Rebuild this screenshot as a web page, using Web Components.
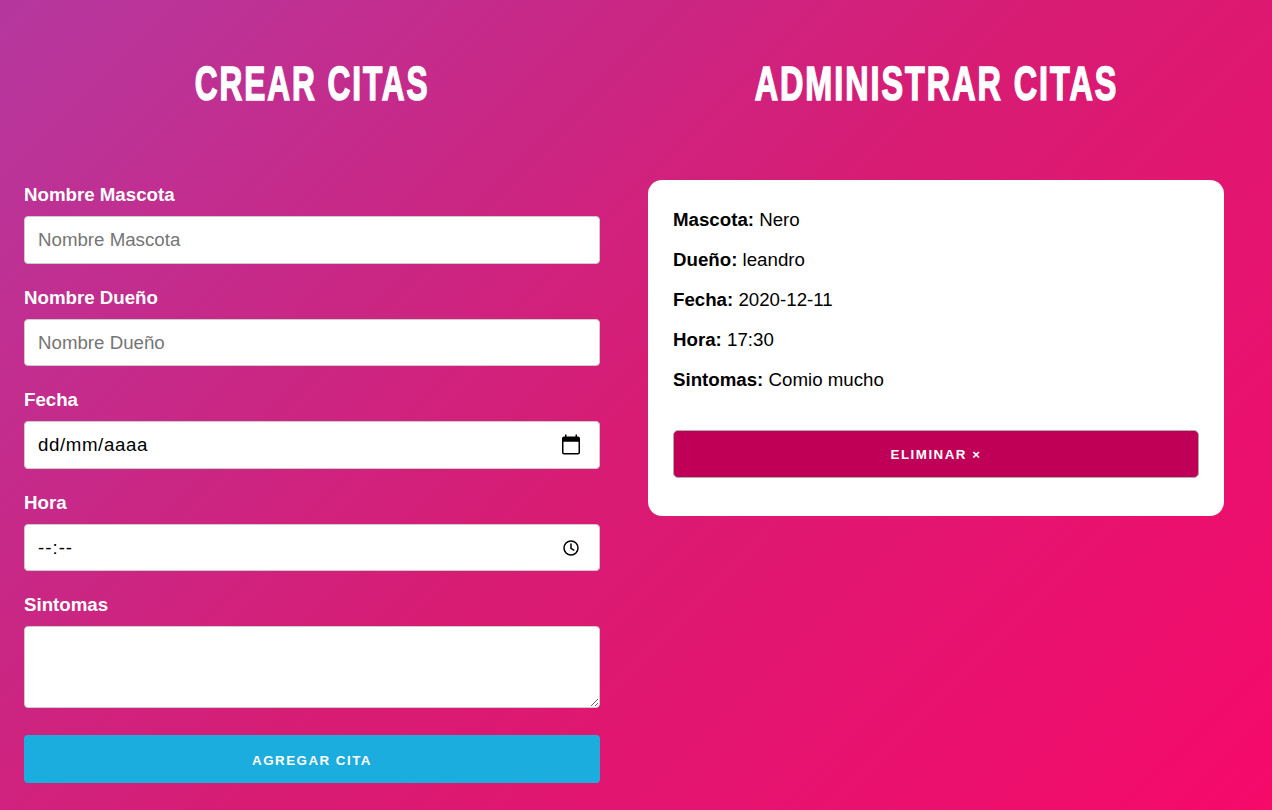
<!doctype html>
<html lang="es">
<head>
<meta charset="utf-8">
<title>Administrador de citas</title>
<style>
html { height: 100%; }
body {
  margin: 0;
  min-height: 100vh;
  background: linear-gradient(135deg, #b5389f 0%, #d71c74 50%, #f60a6a 100%);
  font-family: "Liberation Sans", Arial, sans-serif;
  font-size: 18.7px;
  overflow: hidden;
}
</style>
</head>
<body>
<citas-app>
  <citas-column titulo="Crear citas" escala="0.645">
    <cita-form></cita-form>
  </citas-column>
  <citas-column titulo="Administrar citas" escala="0.66">
    <cita-card mascota="Nero" dueno="leandro" fecha="2020-12-11" hora="17:30" sintomas="Comio mucho"></cita-card>
  </citas-column>
</citas-app>

<script>
const appTemplate = document.createElement('template')
appTemplate.innerHTML = `
  <style>
    :host {
      display: grid;
      grid-template-columns: 576px 576px;
      column-gap: 48px;
      padding: 0 24px;
    }
  </style>
  <slot></slot>
`

customElements.define('citas-app',
  class extends HTMLElement {
    constructor () {
      super()
      this.attachShadow({ mode: 'open' })
      this.shadowRoot.appendChild(appTemplate.content.cloneNode(true))
    }
  })

const columnTemplate = document.createElement('template')
columnTemplate.innerHTML = `
  <style>
    :host {
      display: block;
    }
    h2 {
      margin: 0;
      padding: 54px 0 0;
      height: 126px;
      box-sizing: border-box;
      color: white;
      text-align: center;
      text-transform: uppercase;
      font-family: "Liberation Sans", Arial, sans-serif;
      font-weight: 700;
      font-size: 49px;
      line-height: 58px;
      letter-spacing: 3px;
      white-space: nowrap;
    }
    /* no hay fuente condensada instalada: se estrecha y engorda la Liberation */
    span {
      display: inline-block;
      -webkit-text-stroke: 1.6px white;
    }
  </style>
  <h2><span></span></h2>
  <slot></slot>
`

customElements.define('citas-column',
  class extends HTMLElement {
    constructor () {
      super()
      this.attachShadow({ mode: 'open' })
      this.shadowRoot.appendChild(columnTemplate.content.cloneNode(true))
    }

    connectedCallback () {
      const title = this.shadowRoot.querySelector('span')
      title.textContent = this.getAttribute('titulo')
      title.style.transform = `scaleX(${this.getAttribute('escala')})`
    }
  })

const fieldTemplate = document.createElement('template')
fieldTemplate.innerHTML = `
  <style>
    :host {
      display: block;
      margin-bottom: 22px;
    }
    label {
      display: block;
      height: 21px;
      margin-bottom: 12px;
      color: white;
      font-weight: 700;
      font-size: 18.7px;
      line-height: 23px;
    }
  </style>
  <label></label>
  <slot></slot>
`

customElements.define('form-field',
  class extends HTMLElement {
    constructor () {
      super()
      this.attachShadow({ mode: 'open' })
      this.shadowRoot.appendChild(fieldTemplate.content.cloneNode(true))
    }

    connectedCallback () {
      this.shadowRoot.querySelector('label').textContent = this.getAttribute('label')
    }
  })

const formTemplate = document.createElement('template')
formTemplate.innerHTML = `
  <style>
    :host {
      display: block;
      padding-top: 57.4px;
    }
    .control {
      display: flex;
      align-items: center;
      justify-content: space-between;
      width: 100%;
      height: 47.5px;
      box-sizing: border-box;
      padding: 0 13px;
      border: 1px solid #ccc;
      border-radius: 4px;
      background: white;
      color: black;
      font: 18.7px "Liberation Sans", Arial, sans-serif;
    }
    input.control::placeholder {
      color: #757575;
    }
    textarea.control {
      display: block;
      height: 82px;
      resize: vertical;
    }
    .date span {
      letter-spacing: 0.6px;
    }
    .time span {
      letter-spacing: 1px;
    }
    .control svg {
      display: block;
      flex: none;
    }
    .date svg { margin-right: 3px; }
    .time svg { margin-right: 6px; }
    button {
      display: block;
      width: 100%;
      height: 48px;
      margin-top: 26.6px;
      padding: 3px 0 0;
      border: none;
      border-radius: 4px;
      background: #1caddf;
      color: white;
      font: 700 13.33px "Liberation Sans", Arial, sans-serif;
      letter-spacing: 1.5px;
      text-transform: uppercase;
    }
  </style>
  <form-field label="Nombre Mascota">
    <input class="control" type="text" placeholder="Nombre Mascota">
  </form-field>
  <form-field label="Nombre Dueño">
    <input class="control" type="text" placeholder="Nombre Dueño">
  </form-field>
  <form-field label="Fecha">
    <div class="control date">
      <span>dd/mm/aaaa</span>
      <svg width="24" height="24" viewBox="0 0 24 24"><path d="M19 3.500h-1V1.500h-1.500v2h-9v-2H6v2H5c-1.100 0-2 .9-2 2v14c0 1.100.9 2 2 2h14c1.100 0 2-.9 2-2v-14c0-1.100-.9-2-2-2zm.5 16c0 .3-.2.500-.5.500H5c-.3 0-.5-.2-.5-.5V8.800h15v10.700z"/></svg>
    </div>
  </form-field>
  <form-field label="Hora">
    <div class="control time">
      <span>--:--</span>
      <svg width="18" height="18" viewBox="0 0 18 18" fill="none" stroke="black"><circle cx="9" cy="9" r="7" stroke-width="1.500"/><path d="M9 4.500V9.300l3.300 2" stroke-width="1.500"/></svg>
    </div>
  </form-field>
  <form-field label="Sintomas">
    <textarea class="control"></textarea>
  </form-field>
  <button type="submit">Agregar cita</button>
`

customElements.define('cita-form',
  class extends HTMLElement {
    constructor () {
      super()
      this.attachShadow({ mode: 'open' })
      this.shadowRoot.appendChild(formTemplate.content.cloneNode(true))
    }
  })

const cardTemplate = document.createElement('template')
cardTemplate.innerHTML = `
  <style>
    :host {
      display: block;
      box-sizing: border-box;
      height: 336px;
      margin-top: 54px;
      padding: 30px 25px 0;
      border-radius: 14px;
      background: white;
      color: black;
      font-size: 18.7px;
    }
    p {
      margin: 0 0 19.3px;
      line-height: 20.7px;
    }
    button {
      display: block;
      width: 100%;
      height: 48px;
      margin-top: 39px;
      padding: 1px 0 0;
      border: 1px solid #aaa;
      border-radius: 5px;
      background: #c00057;
      color: white;
      font: 700 13.33px "Liberation Sans", Arial, sans-serif;
      letter-spacing: 1.5px;
      text-transform: uppercase;
    }
  </style>
  <p><b>Mascota:</b> <span id="mascota"></span></p>
  <p><b>Dueño:</b> <span id="dueno"></span></p>
  <p><b>Fecha:</b> <span id="fecha"></span></p>
  <p><b>Hora:</b> <span id="hora"></span></p>
  <p><b>Sintomas:</b> <span id="sintomas"></span></p>
  <button type="button">Eliminar ×</button>
`

customElements.define('cita-card',
  class extends HTMLElement {
    constructor () {
      super()
      this.attachShadow({ mode: 'open' })
      this.shadowRoot.appendChild(cardTemplate.content.cloneNode(true))
    }

    connectedCallback () {
      for (const name of ['mascota', 'dueno', 'fecha', 'hora', 'sintomas']) {
        this.shadowRoot.getElementById(name).textContent = this.getAttribute(name)
      }
    }
  })
</script>
</body>
</html>
